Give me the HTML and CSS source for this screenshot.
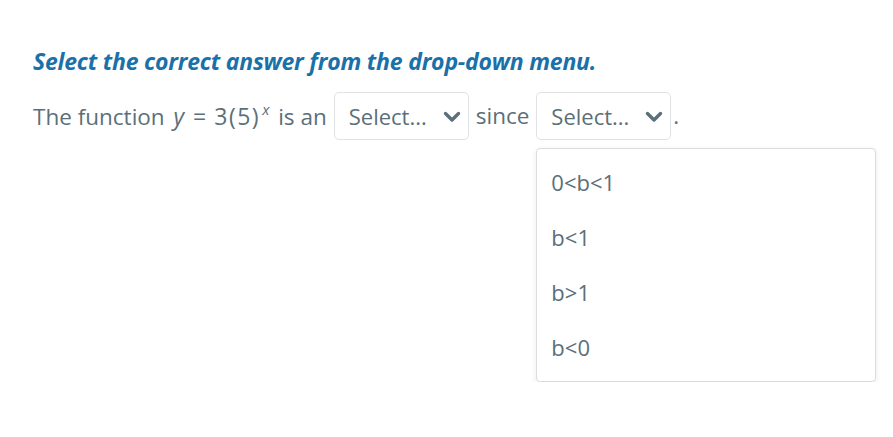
FILE: index.html
```html
<!DOCTYPE html>
<html>
<head>
<meta charset="utf-8">
<link rel="stylesheet" href="styles.css">
</head>
<body>
<div class="page">
  <h1 class="prompt">Select the correct answer from the drop-down menu.</h1>
  <div class="question">
    <span class="txt">The function <span class="math"><i class="var">y</i><span class="eq">=</span><span class="num">3(5)</span><sup class="sup">x</sup></span> is an</span>
    <div class="select"><span class="label">Select...</span>
      <svg class="chev" width="18" height="12" viewBox="0 0 18 12"><path d="M2.5 2.5 L9 9 L15.5 2.5" fill="none" stroke="#5b707a" stroke-width="3.4" stroke-linecap="round" stroke-linejoin="round"/></svg>
    </div>
    <span class="txt">since</span>
    <div class="select-col">
      <div class="select"><span class="label">Select...</span>
        <svg class="chev" width="18" height="12" viewBox="0 0 18 12"><path d="M2.5 2.5 L9 9 L15.5 2.5" fill="none" stroke="#5b707a" stroke-width="3.4" stroke-linecap="round" stroke-linejoin="round"/></svg>
      </div>
      <ul class="menu">
        <li class="opt">0&lt;b&lt;1</li>
        <li class="opt">b&lt;1</li>
        <li class="opt">b&gt;1</li>
        <li class="opt">b&lt;0</li>
      </ul>
    </div>
    <span class="txt dot">.</span>
  </div>
</div>
</body>
</html>
```
FILE: styles.css
```css
html, body { margin: 0; padding: 0; background: #fff; }
body { font-family: "Open Sans", "Noto Sans", sans-serif; color: #5b6f79; }
.page { padding: 45px 0 0 33px; }
.prompt {
  margin: 0;
  font-size: 23px;
  font-weight: 700;
  font-style: italic;
  color: #1a70a9;
  line-height: 32px;
  letter-spacing: -0.2px;
}
.question {
  margin-top: 15px;
  display: flex;
  align-items: flex-start;
  gap: 7px;
  font-size: 22.5px;
}
.txt { white-space: nowrap; height: 48px; line-height: 48px; }
.math { font-size: 23px; margin-left: 3px; margin-right: 1px; }
.var { font-style: italic; }
.eq { margin: 0 8px 0 9px; }
.num { letter-spacing: 1.5px; }
.sup { font-size: 15px; font-style: italic; vertical-align: 10px; line-height: 0; margin-left: 2px; margin-right: 2px; }
.select-col { display: flex; flex-direction: column; gap: 8px; width: 135px; }
.select {
  box-sizing: border-box;
  width: 135px;
  height: 48px;
  border: 1px solid #dfe3e5;
  border-radius: 5px;
  display: flex;
  align-items: center;
  justify-content: space-between;
  padding: 0 7px 0 14px;
  background: #fff;
}
.label { font-size: 22px; color: #5b6f79; line-height: 46px; }
.chev { display: block; margin-top: 2px; }
.menu {
  width: 340px;
  flex: none;
  box-sizing: border-box;
  margin: 0;
  padding: 6px 0;
  list-style: none;
  background: #fff;
  border: 1px solid #dcdcdc;
  border-radius: 4px;
  box-shadow: 0 2px 6px rgba(0,0,0,0.08);
}
.opt {
  height: 55px;
  line-height: 55px;
  padding-left: 14px;
  font-size: 22px;
  color: #5b6f79;
}
.dot { margin-left: -5px; }
```
